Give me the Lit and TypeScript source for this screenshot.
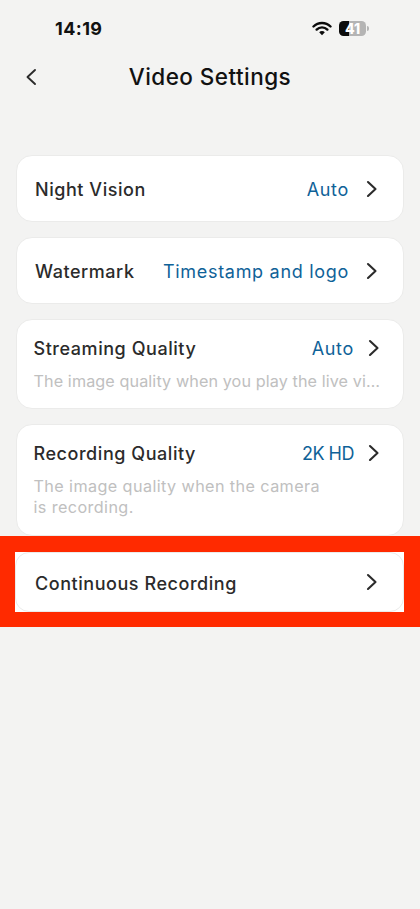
import { LitElement, html, css, svg } from "lit";
import { customElement } from "lit/decorators.js";

const chevron = html`<svg class="chev" width="12" height="18" viewBox="0 0 12 18" fill="none"><path d="M2 2l7.5 7L2 16" stroke="#2b2b2b" stroke-width="2.1" stroke-linecap="round" stroke-linejoin="round"/></svg>`;

@customElement("app-root")
export class AppRoot extends LitElement {
  static styles = css`
    :host { display: block; width: 420px; height: 909px; background: #f3f3f2; font-family: Inter, "Noto Sans", sans-serif; overflow: hidden; }
    .status { height: 56px; display: flex; justify-content: space-between; align-items: center; padding: 1px 51px 0 55px; box-sizing: border-box; }
    .time { font-size: 18px; font-weight: 700; color: #111; letter-spacing: .4px; }
    .icons { display: flex; align-items: center; gap: 7px; }
    .batt { display: flex; align-items: center; gap: 1px; }
    .cell { width: 27px; height: 15px; border-radius: 4.5px; background: linear-gradient(90deg, #0c0c0c 0 38%, #b4b4b4 38%); color: #fff; font-size: 14px; font-weight: 800; display: flex; align-items: center; justify-content: center; line-height: 1; }
    .nub { width: 2px; height: 5px; background: #b4b4b4; border-radius: 0 2px 2px 0; }
    .nav { height: 40px; display: flex; align-items: center; justify-content: center; position: relative; }
    .back { position: absolute; left: 25px; top: 12px; }
    h1 { margin: 0; font-size: 22.5px; font-weight: 500; color: #111; letter-spacing: .45px; }
    .list { display: flex; flex-direction: column; gap: 15px; padding: 59px 16px 0; }
    .card { background: #fff; border: 1px solid #ebebea; border-radius: 16px; box-sizing: border-box; width: 388px; }
    .row { display: flex; align-items: center; justify-content: space-between; height: 65px; padding: 0 25px 0 18px; }
    .left { font-size: 18px; font-weight: 500; color: #2b2b2b; white-space: nowrap; letter-spacing: .55px; }
    .row .left, .row .val { margin-top: 2px; }
    .right { display: flex; align-items: center; gap: 17px; }
    .val { font-size: 18px; color: #0f6298; white-space: nowrap; letter-spacing: .7px; }
    .val.tight { letter-spacing: -.5px; }
    .tall { padding: 16px 25px 0 16.5px; }
    .tall.one { height: 90px; }
    .tall.two { height: 112px; }
    .head { display: flex; justify-content: space-between; align-items: center; height: 24px; }
    .tall .right { gap: 14px; margin-right: -2px; }
    .desc { font-size: 16.2px; color: #c0c0c0; line-height: 20.5px; margin-top: 11px; letter-spacing: .4px; }
    .single { white-space: nowrap; letter-spacing: .09px; }
    .narrow { width: 295px; }
    .mark { border-style: solid; border-color: #ff2a00; border-width: 16px 16px 15px 15px; width: 420px; height: 91px; box-sizing: border-box; background: #fff; margin: -15px -16px 0; }
    .mark .card { width: 389px; height: 60px; border-radius: 14px; }
    .mark .row { height: 58px; padding: 0 25px 0 19px; }
    .mark .left { margin-top: 2px; }
  `;

  render() {
    return html`
      <div class="status">
        <span class="time">14:19</span>
        <div class="icons">
          <svg width="20" height="15" viewBox="0 0 20 15">
            ${svg`<path d="M1.5 5.5a12 12 0 0 1 17 0" fill="none" stroke="#0c0c0c" stroke-width="2.4" stroke-linecap="round"/>
            <path d="M4.6 8.6a7.7 7.7 0 0 1 10.8 0" fill="none" stroke="#0c0c0c" stroke-width="2.4" stroke-linecap="round"/>
            <path d="M7.2 11.3a3.8 3.8 0 0 1 5.6 0L10 14.2z" fill="#0c0c0c"/>`}
          </svg>
          <div class="batt"><div class="cell">41</div><div class="nub"></div></div>
        </div>
      </div>
      <div class="nav">
        <svg class="back" width="12" height="18" viewBox="0 0 12 18" fill="none"><path d="M10 2L2.5 9l7.5 7" stroke="#2b2b2b" stroke-width="1.9" stroke-linecap="round" stroke-linejoin="round"/></svg>
        <h1>Video Settings</h1>
      </div>
      <div class="list">
        <div class="card"><div class="row"><span class="left">Night Vision</span><span class="right"><span class="val">Auto</span>${chevron}</span></div></div>
        <div class="card"><div class="row"><span class="left">Watermark</span><span class="right"><span class="val">Timestamp and logo</span>${chevron}</span></div></div>
        <div class="card tall one">
          <div class="head"><span class="left">Streaming Quality</span><span class="right"><span class="val">Auto</span>${chevron}</span></div>
          <div class="desc single">The image quality when you play the live vi…</div>
        </div>
        <div class="card tall two">
          <div class="head"><span class="left">Recording Quality</span><span class="right"><span class="val tight">2K HD</span>${chevron}</span></div>
          <div class="desc narrow">The image quality when the camera is recording.</div>
        </div>
        <div class="mark"><div class="card"><div class="row"><span class="left">Continuous Recording</span><span class="right">${chevron}</span></div></div></div>
      </div>
    `;
  }
}
